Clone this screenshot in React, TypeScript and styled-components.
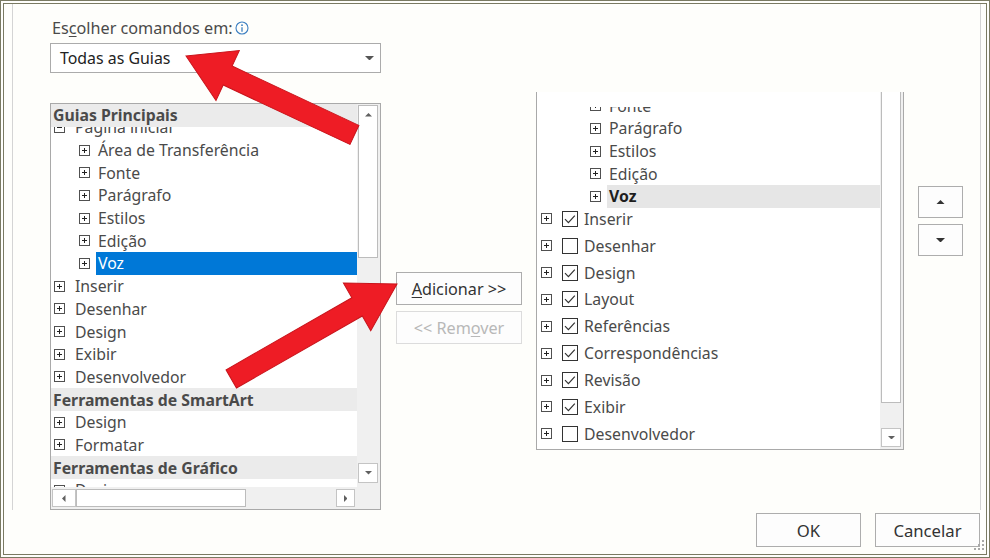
import React from "react";
import styled, { createGlobalStyle } from "styled-components";

const FONT = `"Noto Sans", "Open Sans", "Liberation Sans", sans-serif`;

const GlobalStyle = createGlobalStyle`
  html, body { margin: 0; padding: 0; background: #ffffff; }
  body { font-family: ${FONT}; }
  * { box-sizing: border-box; }
`;

type Node =
  | { kind: "header"; text: string }
  | { kind: "item"; text: string; level: 1 | 2; expanded?: boolean; selected?: boolean; check?: boolean; clip?: number };

const leftTree: Node[] = [
  { kind: "header", text: "Guias Principais" },
  { kind: "item", text: "Página inicial", level: 1, expanded: true, clip: 12 },
  { kind: "item", text: "Área de Transferência", level: 2 },
  { kind: "item", text: "Fonte", level: 2 },
  { kind: "item", text: "Parágrafo", level: 2 },
  { kind: "item", text: "Estilos", level: 2 },
  { kind: "item", text: "Edição", level: 2 },
  { kind: "item", text: "Voz", level: 2, selected: true },
  { kind: "item", text: "Inserir", level: 1 },
  { kind: "item", text: "Desenhar", level: 1 },
  { kind: "item", text: "Design", level: 1 },
  { kind: "item", text: "Exibir", level: 1 },
  { kind: "item", text: "Desenvolvedor", level: 1 },
  { kind: "header", text: "Ferramentas de SmartArt" },
  { kind: "item", text: "Design", level: 1 },
  { kind: "item", text: "Formatar", level: 1 },
  { kind: "header", text: "Ferramentas de Gráfico" },
  { kind: "item", text: "Design", level: 1 },
];

const rightTree: Node[] = [
  { kind: "item", text: "Fonte", level: 2, clip: 10 },
  { kind: "item", text: "Parágrafo", level: 2 },
  { kind: "item", text: "Estilos", level: 2 },
  { kind: "item", text: "Edição", level: 2 },
  { kind: "item", text: "Voz", level: 2, selected: true },
  { kind: "item", text: "Inserir", level: 1, check: true },
  { kind: "item", text: "Desenhar", level: 1, check: false },
  { kind: "item", text: "Design", level: 1, check: true },
  { kind: "item", text: "Layout", level: 1, check: true },
  { kind: "item", text: "Referências", level: 1, check: true },
  { kind: "item", text: "Correspondências", level: 1, check: true },
  { kind: "item", text: "Revisão", level: 1, check: true },
  { kind: "item", text: "Exibir", level: 1, check: true },
  { kind: "item", text: "Desenvolvedor", level: 1, check: false },
];

/* ---------- frame ---------- */

const Frame = styled.div`
  position: relative;
  width: 990px;
  height: 558px;
  border: 4px double #7a7a62;
  background: #fefefb;
  display: flex;
  flex-direction: column;
  overflow: hidden;
  color: #444;
`;

const Panel = styled.div`
  margin-left: 8px;
  width: 969px;
  height: 506px;
  border-left: 1px solid #d4d4d4;
  border-right: 1px solid #d4d4d4;
  display: flex;
  align-items: flex-start;
  padding-left: 37px;
`;

/* ---------- left column ---------- */

const LeftColumn = styled.div`
  width: 331px;
  display: flex;
  flex-direction: column;
  padding-top: 14px;
`;

const Label = styled.div`
  height: 20px;
  margin-left: 2px;
  display: flex;
  align-items: center;
  gap: 2px;
  font-size: 16.2px;
  color: #4a4a4a;
`;

const Accel = styled.span`
  text-decoration: underline;
  text-underline-offset: 2px;
`;

const Dropdown = styled.div`
  margin-top: 5px;
  height: 30px;
  border: 1px solid #ababab;
  background: #ffffff;
  display: flex;
  align-items: center;
  justify-content: space-between;
  padding: 0 6px 0 9px;
  font-size: 15.9px;
  color: #222;
`;

const ListBox = styled.div<{ $hScroll?: boolean; $noTop?: boolean }>`
  border: 1px solid #a9a9a9;
  ${(p) => (p.$noTop ? "border-top: none;" : "")}
  background: #ffffff;
  display: grid;
  grid-template-columns: 1fr 23px;
  grid-template-rows: ${(p) => (p.$hScroll ? "1fr 22px" : "1fr")};
  overflow: hidden;
`;

const LeftList = styled(ListBox)`
  margin-top: 30px;
  height: 407px;
`;

const ListContent = styled.div<{ $padTop?: number }>`
  overflow: hidden;
  padding-top: ${(p) => p.$padTop ?? 0}px;
  font-size: 15.8px;
`;

const HeaderRow = styled.div`
  height: 22.7px;
  display: flex;
  align-items: center;
  padding-left: 2px;
  background: #ebebeb;
  font-weight: 700;
  color: #4a4a4a;
  white-space: nowrap;
`;

const ClipRow = styled.div<{ $h: number }>`
  height: ${(p) => p.$h}px;
  overflow: hidden;
  display: flex;
  flex-direction: column;
  justify-content: flex-end;
`;

const TreeRow = styled.div<{ $indent: number; $h: number; $top?: boolean }>`
  flex: none;
  height: ${(p) => p.$h}px;
  display: flex;
  align-items: ${(p) => (p.$top ? "flex-start" : "center")};
  padding-left: ${(p) => p.$indent}px;
  white-space: nowrap;
`;

const RowInner = styled.div`
  height: 22px;
  display: flex;
  align-items: center;
  flex: 1;
`;

const ItemLabel = styled.div<{ $selected?: boolean; $soft?: boolean; $gap: number }>`
  flex: 1;
  align-self: stretch;
  display: flex;
  align-items: center;
  margin-left: ${(p) => p.$gap}px;
  padding: 0 2px;
  color: ${(p) => (p.$selected && !p.$soft ? "#ffffff" : p.$soft && p.$selected ? "#1e1e1e" : "#4a4a4a")};
  font-weight: ${(p) => (p.$soft && p.$selected ? 700 : 400)};
  background: ${(p) => (p.$selected ? (p.$soft ? "#e6e6e6" : "#0078d7") : "transparent")};
`;

const CheckText = styled.div`
  margin-left: 6px;
  color: #4a4a4a;
`;

/* ---------- scrollbars ---------- */

const VScroll = styled.div<{ $padTop?: number; $padBottom?: number }>`
  background: #f0f0f0;
  display: flex;
  flex-direction: column;
  padding: ${(p) => p.$padTop ?? 1}px 2px ${(p) => p.$padBottom ?? 4}px 1px;
`;

const ScrollBox = styled.div<{ $h?: number; $w?: number; $noTop?: boolean }>`
  flex: none;
  ${(p) => (p.$h ? `height: ${p.$h}px;` : "")}
  ${(p) => (p.$w ? `width: ${p.$w}px;` : "")}
  background: #ffffff;
  border: 1px solid #bcbcbc;
  ${(p) => (p.$noTop ? "border-top: none;" : "")}
  display: flex;
  align-items: flex-start;
  justify-content: center;
`;

const ArrowBox = styled.div<{ $h?: number; $w?: number }>`
  flex: none;
  ${(p) => (p.$h ? `height: ${p.$h}px;` : "")}
  ${(p) => (p.$w ? `width: ${p.$w}px;` : "")}
  background: #ffffff;
  border: 1px solid #c4c4c4;
  display: flex;
  align-items: center;
  justify-content: center;
`;

const TopArrowSlot = styled.div`
  height: 18px;
  display: flex;
  align-items: center;
`;

const Track = styled.div`
  flex: 1;
`;

const HScroll = styled.div`
  background: #f0f0f0;
  display: flex;
  padding: 2px 2px 2px 1px;
`;

const Corner = styled.div`
  background: #f0f0f0;
`;

/* ---------- middle ---------- */

const MiddleColumn = styled.div`
  margin-left: 15px;
  width: 126px;
  padding-top: 268px;
  display: flex;
  flex-direction: column;
  gap: 6px;
`;

const ActionButton = styled.div<{ $disabled?: boolean }>`
  height: 33px;
  border: 1px solid ${(p) => (p.$disabled ? "#dcdcdc" : "#adadad")};
  background: #fdfdfd;
  display: flex;
  align-items: center;
  justify-content: center;
  font-size: 16.2px;
  color: ${(p) => (p.$disabled ? "#b8b8b8" : "#333")};
`;

/* ---------- right ---------- */

const RightList = styled(ListBox)`
  margin-left: 14px;
  margin-top: 88px;
  width: 368px;
  height: 358px;
`;

const MoveColumn = styled.div`
  margin-left: 14px;
  padding-top: 182px;
  display: flex;
  flex-direction: column;
  gap: 6px;
`;

const MoveButton = styled.div`
  width: 45px;
  height: 32px;
  border: 1px solid #adadad;
  background: #fdfdfd;
  display: flex;
  align-items: center;
  justify-content: center;
`;

/* ---------- footer ---------- */

const Footer = styled.div`
  flex: 1;
  display: flex;
  justify-content: flex-end;
  align-items: flex-start;
  gap: 14px;
  padding: 3px 6px 0 0;
`;

const DialogButton = styled.div`
  width: 105px;
  height: 34px;
  border: 1px solid #adadad;
  background: #fdfdfd;
  display: flex;
  align-items: center;
  justify-content: center;
  font-size: 16.7px;
  color: #333;
`;

const Overlay = styled.svg`
  position: absolute;
  left: -4px;
  top: -4px;
  pointer-events: none;
`;

const Grip = styled.svg`
  position: absolute;
  right: 0;
  bottom: 0;
`;

/* ---------- small drawings ---------- */

const Tri = ({ dir, size = 8, color = "#555" }: { dir: "up" | "down" | "left" | "right"; size?: number; color?: string }) => {
  const h = size / 2;
  const pts = {
    up: `0,${h} ${h},0 ${size},${h}`,
    down: `0,0 ${size},0 ${h},${h}`,
    left: `${h},0 ${h},${size} 0,${h}`,
    right: `0,0 0,${size} ${h},${h}`,
  }[dir];
  const vertical = dir === "up" || dir === "down";
  return (
    <svg width={vertical ? size : h} height={vertical ? h : size} viewBox={`0 0 ${vertical ? size : h} ${vertical ? h : size}`}>
      <polygon points={pts} fill={color} />
    </svg>
  );
};

const Expander = ({ open }: { open?: boolean }) => (
  <svg width="11" height="11" viewBox="0 0 11 11" shapeRendering="crispEdges" style={{ flex: "none" }}>
    <rect x="0.5" y="0.5" width="10" height="10" fill="#fff" stroke="#505050" />
    <path d="M3 5.5h5" stroke="#222" />
    {!open && <path d="M5.5 3v5" stroke="#222" />}
  </svg>
);

const Check = ({ on }: { on?: boolean }) => (
  <svg width="16" height="16" viewBox="0 0 16 16" style={{ flex: "none", marginLeft: 10 }}>
    <rect x="0.5" y="0.5" width="15" height="15" fill="#fff" stroke="#333" shapeRendering="crispEdges" />
    {on && <path d="M3 8.2 L6.4 11.6 L12.8 4.6" fill="none" stroke="#333" strokeWidth="1.2" />}
  </svg>
);

const InfoIcon = () => (
  <svg width="14" height="14" viewBox="0 0 14 14">
    <circle cx="7" cy="7" r="6" fill="none" stroke="#3c7fc1" strokeWidth="1.1" />
    <circle cx="7" cy="4.2" r="0.9" fill="#3c7fc1" />
    <path d="M7 6.2v4.5" stroke="#3c7fc1" strokeWidth="1.3" />
  </svg>
);

const RedArrow = ({ x, y, angle, len }: { x: number; y: number; angle: number; len: number }) => (
  <g transform={`translate(${x} ${y}) rotate(${angle})`}>
    <polygon
      points={`0,0 46,-27.5 46,-10.5 ${len},-10.5 ${len},10.5 46,10.5 46,27.5`}
      fill="#ee1c25"
      stroke="#c8141b"
      strokeWidth="1"
      strokeLinejoin="miter"
    />
  </g>
);

/* ---------- tree rendering ---------- */

const renderTree = (nodes: Node[], side: "left" | "right") =>
  nodes.map((n, i) => {
    if (n.kind === "header") return <HeaderRow key={i}>{n.text}</HeaderRow>;
    const isRight = side === "right";
    const l1 = n.level === 1;
    const indent = isRight ? (l1 ? 4 : 53) : l1 ? 3 : 28;
    const h = isRight && l1 ? 26.9 : 22.7;
    const row = (
      <TreeRow key={i} $indent={indent} $h={h} $top={isRight && l1}>
        {isRight && l1 ? (
          <RowInner>
            <Expander />
            <Check on={n.check} />
            <CheckText>{n.text}</CheckText>
          </RowInner>
        ) : (
          <>
            <Expander open={n.expanded} />
            <ItemLabel $selected={n.selected} $soft={isRight} $gap={!isRight && l1 ? 8 : 6}>
              {n.text}
            </ItemLabel>
          </>
        )}
      </TreeRow>
    );
    if (n.clip) {
      return (
        <ClipRow key={i} $h={n.clip}>
          {row}
        </ClipRow>
      );
    }
    return row;
  });

export default function App() {
  return (
    <>
      <GlobalStyle />
      <Frame>
        <Panel>
          <LeftColumn>
            <Label>
              <span>
                Es<Accel>c</Accel>olher comandos em:
              </span>
              <InfoIcon />
            </Label>
            <Dropdown>
              <span>Todas as Guias</span>
              <Tri dir="down" size={9} color="#555" />
            </Dropdown>
            <LeftList $hScroll>
              <ListContent>{renderTree(leftTree, "left")}</ListContent>
              <VScroll>
                <ScrollBox $h={153}>
                  <TopArrowSlot>
                    <Tri dir="up" size={7} color="#606060" />
                  </TopArrowSlot>
                </ScrollBox>
                <Track />
                <ArrowBox $h={20}>
                  <Tri dir="down" size={7} color="#606060" />
                </ArrowBox>
              </VScroll>
              <HScroll>
                <ArrowBox $w={24}>
                  <Tri dir="left" size={7} color="#606060" />
                </ArrowBox>
                <ScrollBox $w={170} />
                <Track />
                <ArrowBox $w={19}>
                  <Tri dir="right" size={7} color="#606060" />
                </ArrowBox>
              </HScroll>
              <Corner />
            </LeftList>
          </LeftColumn>

          <MiddleColumn>
            <ActionButton>
              <span>
                <Accel>A</Accel>dicionar &gt;&gt;
              </span>
            </ActionButton>
            <ActionButton $disabled>
              <span>
                &lt;&lt; Rem<Accel>o</Accel>ver
              </span>
            </ActionButton>
          </MiddleColumn>

          <RightList $noTop>
            <ListContent $padTop={15}>{renderTree(rightTree, "right")}</ListContent>
            <VScroll $padTop={0} $padBottom={2}>
              <ScrollBox $h={311} $noTop />
              <Track />
              <ArrowBox $h={19}>
                <Tri dir="down" size={7} color="#606060" />
              </ArrowBox>
            </VScroll>
          </RightList>

          <MoveColumn>
            <MoveButton>
              <Tri dir="up" size={9} color="#333" />
            </MoveButton>
            <MoveButton>
              <Tri dir="down" size={9} color="#333" />
            </MoveButton>
          </MoveColumn>
        </Panel>

        <Footer>
          <DialogButton>OK</DialogButton>
          <DialogButton>Cancelar</DialogButton>
        </Footer>

        <Grip width="14" height="16" viewBox="0 0 14 16">
          {[
            [10, 2], [10, 6], [6, 6], [10, 10], [6, 10], [2, 10],
          ].map(([cx, cy], i) => (
            <rect key={i} x={cx} y={cy} width="2" height="2" fill="#a8a8a8" />
          ))}
        </Grip>

        <Overlay width="990" height="558" viewBox="0 0 990 558">
          <RedArrow x={186} y={56} angle={25.1} len={186} />
          <RedArrow x={397} y={284} angle={150.2} len={191} />
        </Overlay>
      </Frame>
    </>
  );
}
